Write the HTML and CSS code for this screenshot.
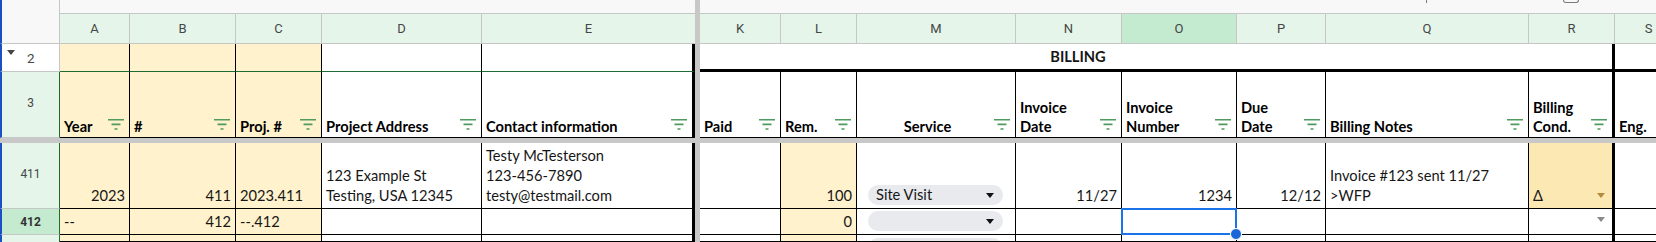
FILE: index.html
```html
<!DOCTYPE html>
<html lang="en">
<head>
    <meta charset="UTF-8">
    <title>Billing Sheet</title>
    <link rel="stylesheet" href="styles.css">
</head>
<body>

<div class="sheet">
    <div class="fz-col"></div>
    <div class="fz-row"></div>

    <!-- toolbar strip -->
    <div class="corner"></div>
    <div class="top span5"></div>
    <div class="top span9"><span class="tick"></span><span class="btn"></span></div>

    <!-- column letters -->
    <div class="ch">A</div>
    <div class="ch">B</div>
    <div class="ch">C</div>
    <div class="ch">D</div>
    <div class="ch nb">E</div>
    <div class="ch">K</div>
    <div class="ch">L</div>
    <div class="ch">M</div>
    <div class="ch">N</div>
    <div class="ch sel">O</div>
    <div class="ch">P</div>
    <div class="ch">Q</div>
    <div class="ch">R</div>
    <div class="ch">S</div>

    <!-- row 2 -->
    <div class="rh rh2"><span class="tri"></span>2</div>
    <div class="c y r2"></div>
    <div class="c y r2"></div>
    <div class="c y r2"></div>
    <div class="c r2"></div>
    <div class="c r2 e"></div>
    <div class="c billing span8">BILLING</div>
    <div class="c s r2b"></div>

    <!-- row 3: labels -->
    <div class="rh f">3</div>
    <div class="c y lab"><span>Year</span><svg class="flt" viewBox="0 0 16 11"><path d="M0 0h16v1.6H0zM3.5 4.6h9v1.6h-9zM6.5 9.2h3v1.6h-3z"/></svg></div>
    <div class="c y lab"><span>#</span><svg class="flt" viewBox="0 0 16 11"><path d="M0 0h16v1.6H0zM3.5 4.6h9v1.6h-9zM6.5 9.2h3v1.6h-3z"/></svg></div>
    <div class="c y lab"><span>Proj. #</span><svg class="flt" viewBox="0 0 16 11"><path d="M0 0h16v1.6H0zM3.5 4.6h9v1.6h-9zM6.5 9.2h3v1.6h-3z"/></svg></div>
    <div class="c lab"><span>Project Address</span><svg class="flt" viewBox="0 0 16 11"><path d="M0 0h16v1.6H0zM3.5 4.6h9v1.6h-9zM6.5 9.2h3v1.6h-3z"/></svg></div>
    <div class="c lab e"><span>Contact information</span><svg class="flt" viewBox="0 0 16 11"><path d="M0 0h16v1.6H0zM3.5 4.6h9v1.6h-9zM6.5 9.2h3v1.6h-3z"/></svg></div>
    <div class="c lab"><span>Paid</span><svg class="flt" viewBox="0 0 16 11"><path d="M0 0h16v1.6H0zM3.5 4.6h9v1.6h-9zM6.5 9.2h3v1.6h-3z"/></svg></div>
    <div class="c lab"><span>Rem.</span><svg class="flt" viewBox="0 0 16 11"><path d="M0 0h16v1.6H0zM3.5 4.6h9v1.6h-9zM6.5 9.2h3v1.6h-3z"/></svg></div>
    <div class="c lab"><span class="mid">Service</span><svg class="flt" viewBox="0 0 16 11"><path d="M0 0h16v1.6H0zM3.5 4.6h9v1.6h-9zM6.5 9.2h3v1.6h-3z"/></svg></div>
    <div class="c lab"><span>Invoice<br>Date</span><svg class="flt" viewBox="0 0 16 11"><path d="M0 0h16v1.6H0zM3.5 4.6h9v1.6h-9zM6.5 9.2h3v1.6h-3z"/></svg></div>
    <div class="c lab"><span>Invoice<br>Number</span><svg class="flt" viewBox="0 0 16 11"><path d="M0 0h16v1.6H0zM3.5 4.6h9v1.6h-9zM6.5 9.2h3v1.6h-3z"/></svg></div>
    <div class="c lab"><span>Due<br>Date</span><svg class="flt" viewBox="0 0 16 11"><path d="M0 0h16v1.6H0zM3.5 4.6h9v1.6h-9zM6.5 9.2h3v1.6h-3z"/></svg></div>
    <div class="c lab"><span>Billing Notes</span><svg class="flt" viewBox="0 0 16 11"><path d="M0 0h16v1.6H0zM3.5 4.6h9v1.6h-9zM6.5 9.2h3v1.6h-3z"/></svg></div>
    <div class="c lab rr"><span>Billing<br>Cond.</span><svg class="flt" viewBox="0 0 16 11"><path d="M0 0h16v1.6H0zM3.5 4.6h9v1.6h-9zM6.5 9.2h3v1.6h-3z"/></svg></div>
    <div class="c lab s"><span>Eng.</span></div>

    <!-- row 411 -->
    <div class="rh f">411</div>
    <div class="c y num">2023</div>
    <div class="c y num">411</div>
    <div class="c y">2023.411</div>
    <div class="c txt">123 Example St<br>Testing, USA 12345</div>
    <div class="c txt e">Testy McTesterson<br>123-456-7890<br>testy@testmail.com</div>
    <div class="c"></div>
    <div class="c y num">100</div>
    <div class="c svc"><span class="chip">Site Visit<i class="arr"></i></span></div>
    <div class="c num">11/27</div>
    <div class="c num">1234</div>
    <div class="c num">12/12</div>
    <div class="c txt">Invoice #123 sent 11/27<br>&gt;WFP</div>
    <div class="c rr cond"><span>Δ</span><i class="arr gold"></i></div>
    <div class="c s"></div>

    <!-- row 412 -->
    <div class="rh f cur">412</div>
    <div class="c y">--</div>
    <div class="c y num">412</div>
    <div class="c y">--.412</div>
    <div class="c"></div>
    <div class="c e"></div>
    <div class="c"></div>
    <div class="c y num">0</div>
    <div class="c svc"><span class="chip"><i class="arr"></i></span></div>
    <div class="c"></div>
    <div class="c active"><span class="ring"></span><span class="knob"></span></div>
    <div class="c"></div>
    <div class="c"></div>
    <div class="c rr cond plain"><i class="arr grey"></i></div>
    <div class="c s"></div>

    <!-- row 413 (only the top edge is in view) -->
    <div class="rh f last"></div>
    <div class="c y"></div>
    <div class="c y"></div>
    <div class="c y"></div>
    <div class="c"></div>
    <div class="c e"></div>
    <div class="c"></div>
    <div class="c y"></div>
    <div class="c svc top-chip"><span class="chip"></span></div>
    <div class="c"></div>
    <div class="c"></div>
    <div class="c"></div>
    <div class="c"></div>
    <div class="c rr"></div>
    <div class="c s"></div>
</div>

</body>
</html>
```

FILE: styles.css
```css
body {
    margin: 0;
    width: 1656px;
    height: 242px;
    overflow: hidden;
    background: #fff;
    font-family: Lato, "Liberation Sans", sans-serif;
}

.sheet {
    display: grid;
    grid-template-columns: 60px 70px 106px 86px 160px 213px 5px 81px 76px 159px 106px 115px 89px 203px 86px 68px;
    grid-template-rows: 14px 30px 28px 66px 5px 66px 26px 7px;
    overflow: hidden;
}

.span5 { grid-column: span 5; }
.span8 { grid-column: span 8; }
.span9 { grid-column: span 9; }

/* frozen pane dividers */
.fz-col {
    grid-column: 7;
    grid-row: 1 / -1;
    background: #c8c8c8;
}

.fz-row {
    grid-column: 1 / -1;
    grid-row: 5;
    background: #c8c8c8;
}

.corner {
    grid-row: span 2;
    background: #f8f8f8;
    border-left: 2px solid #1c4fc4;
    border-right: 1px solid #c4c7c5;
    border-bottom: 1px solid #c4c7c5;
}

.top {
    background: #f8f8f8;
    border-bottom: 1px solid #c4c7c5;
    display: flex;
    align-items: flex-start;
}

.tick {
    margin-left: 726px;
    width: 1px;
    height: 3px;
    background: #7a7a7a;
}

.btn {
    margin-left: 136px;
    width: 14px;
    height: 2px;
    border: 1.5px solid #7a7a7a;
    border-top: none;
    border-radius: 0 0 4px 4px;
}

/* column letters */
.ch {
    background: #e6f5ea;
    border-right: 1px solid #c4c7c5;
    border-bottom: 1px solid #c4c7c5;
    display: flex;
    align-items: center;
    justify-content: center;
    font-family: Roboto, "Liberation Sans", sans-serif;
    font-size: 13px;
    color: #444746;
}

.ch.nb { border-right: none; }
.ch.sel { background: #c4eacf; }

/* row numbers */
.rh {
    background: #e6f5ea;
    border-left: 2px solid #1c4fc4;
    border-right: 1px solid #c4c7c5;
    border-bottom: 1px solid #c4c7c5;
    display: flex;
    align-items: center;
    justify-content: center;
    font-family: Roboto, "Liberation Sans", sans-serif;
    font-size: 12px;
    color: #444746;
    padding-bottom: 3px;
    box-sizing: border-box;
}

.rh2 {
    background: #fff;
    justify-content: flex-start;
    padding: 0 0 0 5px;
    gap: 12px;
    font-size: 13.5px;
}

.rh.f { border-right-color: #1e6b34; }
.rh.cur { background: #c4eacf; font-weight: bold; color: #333; padding-bottom: 0; }
.rh.last { border-bottom: none; padding: 0; }

.tri {
    align-self: flex-start;
    margin-top: 6px;
    border-left: 4px solid transparent;
    border-right: 4px solid transparent;
    border-top: 5px solid #444;
}

/* cells */
.c {
    box-sizing: border-box;
    border-right: 1px solid #000;
    border-bottom: 1px solid #000;
    padding: 0 4px 2px;
    display: flex;
    align-items: flex-end;
    font-size: 14.67px;
    line-height: 20px;
    color: #161616;
    white-space: nowrap;
    overflow: hidden;
}

.y { background: #fff2cc; }
.e { border-right: 3px solid #000; }
.rr { border-right: 3px solid #000; }
.s { border-right: none; }
.num { justify-content: flex-end; }

.r2 { border-bottom-color: #1e6b34; }
.r2b { border-bottom: 3px solid #000; }

.billing {
    border-right: 3px solid #000;
    border-bottom: 3px solid #000;
    align-items: center;
    justify-content: center;
    padding: 0 156px 0 0;
    font-weight: bold;
}

.lab {
    font-weight: bold;
    line-height: 19px;
    padding-bottom: 1px;
    color: #000;
}

.lab .mid {
    flex: 1;
    text-align: center;
}

.flt {
    flex: none;
    width: 16px;
    height: 11px;
    fill: #4f9a5f;
    margin: 0 1px 6px auto;
}

.svc { padding: 0 12px 3px 11px; }

.chip {
    flex: 1;
    height: 20px;
    border-radius: 10px;
    background: #e8eaed;
    display: flex;
    align-items: center;
    justify-content: space-between;
    padding: 0 9px 0 8px;
    line-height: 20px;
}

.chip .arr { margin-left: auto; }

.top-chip { align-items: flex-start; padding-top: 3px; }

.arr {
    display: block;
    border-left: 4.5px solid transparent;
    border-right: 4.5px solid transparent;
    border-top: 5px solid #111;
}

.cond {
    background: #fce8b2;
    justify-content: space-between;
    padding-right: 7px;
}

.cond .arr { margin-bottom: 8px; }
.cond.plain { background: #fff; }
.arr.gold { border-top-color: #b48a3c; }
.arr.grey { border-top-color: #8a8a8a; margin: 0 0 10px auto; }

/* selected cell O412 */
.active {
    position: relative;
    overflow: visible;
}

.ring {
    position: absolute;
    left: -1px;
    top: -1px;
    right: -1px;
    bottom: -1px;
    border: 2px solid #1a73e8;
}

.knob {
    position: absolute;
    right: -6px;
    bottom: -6px;
    width: 10px;
    height: 10px;
    border-radius: 50%;
    background: #1a66d8;
    border: 1px solid #fff;
    z-index: 2;
}
```
